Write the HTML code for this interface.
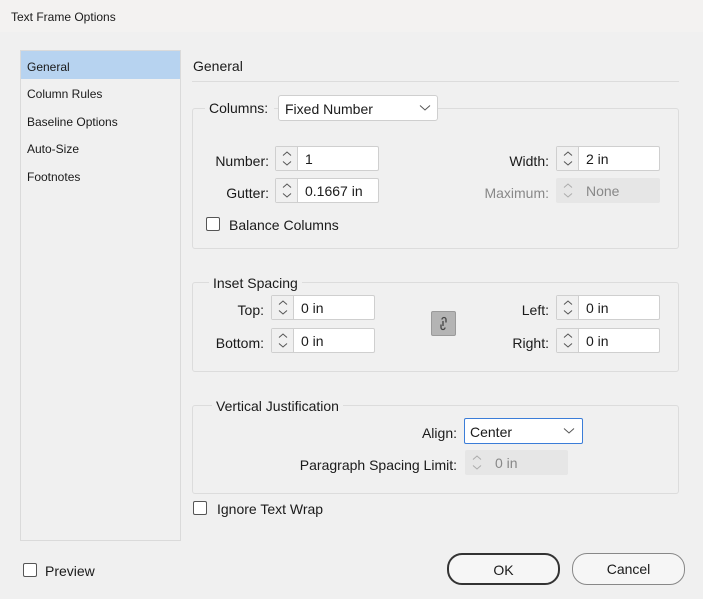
<!DOCTYPE html>
<html><head><style>
*{box-sizing:border-box;margin:0;padding:0}
body{width:703px;height:599px;background:#f0f0f0;font-family:"Liberation Sans",sans-serif;color:#1a1a1a;position:relative;overflow:hidden}
.a{position:absolute}
.t{position:absolute;font-size:14px;white-space:nowrap;line-height:16px}
.r{position:absolute;font-size:14px;white-space:nowrap;line-height:16px;text-align:right;width:200px}
.s{position:absolute;font-size:12px;white-space:nowrap;line-height:14px}
.grp{position:absolute;border:1px solid #dcdcdc;border-radius:3px}
.leg{position:absolute;background:#f0f0f0;padding:0 4px;font-size:14px;line-height:16px}
.fld{position:absolute;height:25px;border:1px solid #cfcfcf;border-radius:2px;background:#fff;font-size:14px}
.fld .sp{position:absolute;left:0;top:0;width:22px;height:23px;background:#f0f0f0;border-right:1px solid #cfcfcf}
.fld .v{position:absolute;left:29px;top:4px}
.fld.dis{background:#e6e6e6;border-color:#e6e6e6;color:#888}
.fld.dis .sp{background:#e6e6e6;border-color:#e6e6e6}
.cb{position:absolute;width:14px;height:14px;border:1px solid #555;border-radius:2px;background:#fff}
.btn{position:absolute;height:32px;border-radius:15px;font-size:14px;text-align:center;line-height:30px;background:#f6f6f6}
</style></head><body>
<svg width="0" height="0" style="position:absolute"><defs><symbol id="spn" viewBox="0 0 22 23"><path d="M7 8.5l4-3.5 4 3.5M7 14.5l4 3.5 4-3.5" fill="none" stroke="#555" stroke-width="1"/></symbol></defs></svg>
<div class="a" style="left:0;top:0;width:703px;height:32px;background:#f3f2f1"></div>
<div class="s" style="left:11px;top:10px">Text Frame Options</div>

<div class="a" style="left:20px;top:50px;width:161px;height:491px;border:1px solid #dadada;background:#f0f0f0"></div>
<div class="a" style="left:21px;top:51px;width:159px;height:28px;background:#b7d3f0"></div>
<div class="s" style="left:27px;top:60px">General</div>
<div class="s" style="left:27px;top:87px">Column Rules</div>
<div class="s" style="left:27px;top:115px">Baseline Options</div>
<div class="s" style="left:27px;top:142px">Auto-Size</div>
<div class="s" style="left:27px;top:170px">Footnotes</div>

<div class="t" style="left:193px;top:58px">General</div>
<div class="a" style="left:192px;top:81px;width:487px;height:1px;background:#dcdcdc"></div>

<div class="grp" style="left:192px;top:108px;width:487px;height:141px"></div>
<div class="leg" style="left:205px;top:100px;padding-right:6px">Columns:</div>
<div class="a" style="left:278px;top:95px;width:160px;height:26px;border:1px solid #cfcfcf;border-radius:3px;background:#fff"><span class="t" style="left:6px;top:5px">Fixed Number</span><svg class="a" style="right:6px;top:8px" width="12" height="8"><path d="M1 1.5l5 4.5 5-4.5" fill="none" stroke="#555"/></svg></div>

<div class="r" style="left:69px;top:153px">Number:</div>
<div class="fld" style="left:275px;top:146px;width:104px"><div class="sp"><svg width="22" height="23"><use href="#spn"/></svg></div><span class="v">1</span></div>
<div class="r" style="left:69px;top:185px">Gutter:</div>
<div class="fld" style="left:275px;top:178px;width:104px"><div class="sp"><svg width="22" height="23"><use href="#spn"/></svg></div><span class="v">0.1667 in</span></div>
<div class="r" style="left:349px;top:153px">Width:</div>
<div class="fld" style="left:556px;top:146px;width:104px"><div class="sp"><svg width="22" height="23"><use href="#spn"/></svg></div><span class="v">2 in</span></div>
<div class="r" style="left:349px;top:185px;color:#888">Maximum:</div>
<div class="fld dis" style="left:556px;top:178px;width:104px"><div class="sp"><svg width="22" height="23" opacity=".4"><use href="#spn"/></svg></div><span class="v">None</span></div>
<div class="cb" style="left:206px;top:217px"></div>
<div class="t" style="left:229px;top:217px">Balance Columns</div>

<div class="grp" style="left:192px;top:282px;width:487px;height:90px"></div>
<div class="leg" style="left:209px;top:275px">Inset Spacing</div>
<div class="r" style="left:64px;top:302px">Top:</div>
<div class="fld" style="left:271px;top:295px;width:104px"><div class="sp"><svg width="22" height="23"><use href="#spn"/></svg></div><span class="v">0 in</span></div>
<div class="r" style="left:64px;top:335px">Bottom:</div>
<div class="fld" style="left:271px;top:328px;width:104px"><div class="sp"><svg width="22" height="23"><use href="#spn"/></svg></div><span class="v">0 in</span></div>
<div class="a" style="left:431px;top:311px;width:25px;height:25px;background:#b4b4b4;border:1px solid #9a9a9a;border-radius:2px"><svg width="23" height="23"><path d="M10 7.5a2 2 0 0 1 4 0v3M13 15.5a2 2 0 0 1-4 0v-3M11 9v5" fill="none" stroke="#444" stroke-width="1.3"/></svg></div>
<div class="r" style="left:349px;top:302px">Left:</div>
<div class="fld" style="left:556px;top:295px;width:104px"><div class="sp"><svg width="22" height="23"><use href="#spn"/></svg></div><span class="v">0 in</span></div>
<div class="r" style="left:349px;top:335px">Right:</div>
<div class="fld" style="left:556px;top:328px;width:104px"><div class="sp"><svg width="22" height="23"><use href="#spn"/></svg></div><span class="v">0 in</span></div>

<div class="grp" style="left:192px;top:405px;width:487px;height:89px"></div>
<div class="leg" style="left:212px;top:398px">Vertical Justification</div>
<div class="r" style="left:257px;top:425px">Align:</div>
<div class="a" style="left:464px;top:418px;width:119px;height:26px;border:1px solid #3b7dd8;border-radius:2px;background:#fff"><span class="t" style="left:5px;top:5px">Center</span><svg class="a" style="right:7px;top:8px" width="12" height="8"><path d="M1 1.5l5 4.5 5-4.5" fill="none" stroke="#555"/></svg></div>
<div class="r" style="left:257px;top:457px">Paragraph Spacing Limit:</div>
<div class="fld dis" style="left:465px;top:450px;width:103px"><div class="sp"><svg width="22" height="23" opacity=".4"><use href="#spn"/></svg></div><span class="v">0 in</span></div>

<div class="cb" style="left:193px;top:501px"></div>
<div class="t" style="left:217px;top:501px">Ignore Text Wrap</div>

<div class="cb" style="left:23px;top:563px"></div>
<div class="t" style="left:45px;top:563px">Preview</div>
<div class="btn" style="left:447px;top:553px;width:113px;border:2px solid #333">OK</div>
<div class="btn" style="left:572px;top:553px;width:113px;border:1px solid #888;line-height:30px">Cancel</div>
</body></html>
